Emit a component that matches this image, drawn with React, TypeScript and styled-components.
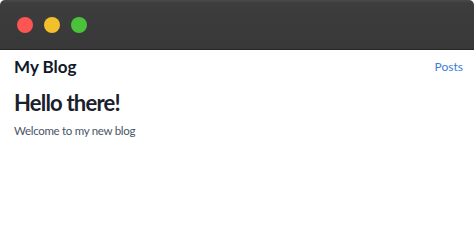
import React from 'react'
import styled, { createGlobalStyle } from 'styled-components'

const GlobalStyle = createGlobalStyle`
  html, body {
    margin: 0;
    padding: 0;
    background: #ffffff;
  }
  body {
    font-family: Lato, "Noto Sans", sans-serif;
  }
`

const Window = styled.div`
  width: 474px;
  height: 234px;
  display: flex;
  flex-direction: column;
  background: #ffffff;
  overflow: hidden;
`

const TitleBar = styled.div`
  height: 50px;
  flex-shrink: 0;
  display: flex;
  align-items: center;
  gap: 11px;
  padding: 0 0 0 17px;
  box-sizing: border-box;
  background: linear-gradient(180deg, #4a4a4a 0px, #3d3d3d 3px, #383838 100%);
  border-radius: 5px 5px 0 0;
  border-bottom: 1px solid #262626;
`

const Dot = styled.span<{ $color: string }>`
  width: 16px;
  height: 16px;
  border-radius: 50%;
  background: ${p => p.$color};
`

const Header = styled.header`
  display: flex;
  justify-content: space-between;
  align-items: center;
  padding: 6px 11px 0 14px;
`

const Brand = styled.div`
  font-size: 17px;
  font-weight: 700;
  color: #111827;
`

const NavLink = styled.a`
  font-size: 12px;
  color: #3b7dd8;
  text-decoration: none;
`

const Main = styled.main`
  padding: 12px 14px 0;
`

const Title = styled.h1`
  margin: 0;
  font-size: 22px;
  font-weight: 700;
  letter-spacing: -0.8px;
  color: #1a202c;
`

const Lead = styled.p`
  margin: 8px 0 0;
  font-size: 11.5px;
  letter-spacing: -0.3px;
  color: #4a5568;
`

const App = () => {
  return (
    <Window>
      <GlobalStyle />
      <TitleBar>
        <Dot $color="#fd5454" />
        <Dot $color="#f1c02c" />
        <Dot $color="#4ac33b" />
      </TitleBar>
      <Header>
        <Brand>My Blog</Brand>
        <NavLink href="#">Posts</NavLink>
      </Header>
      <Main>
        <Title>Hello there!</Title>
        <Lead>Welcome to my new blog</Lead>
      </Main>
    </Window>
  )
}

export default App
